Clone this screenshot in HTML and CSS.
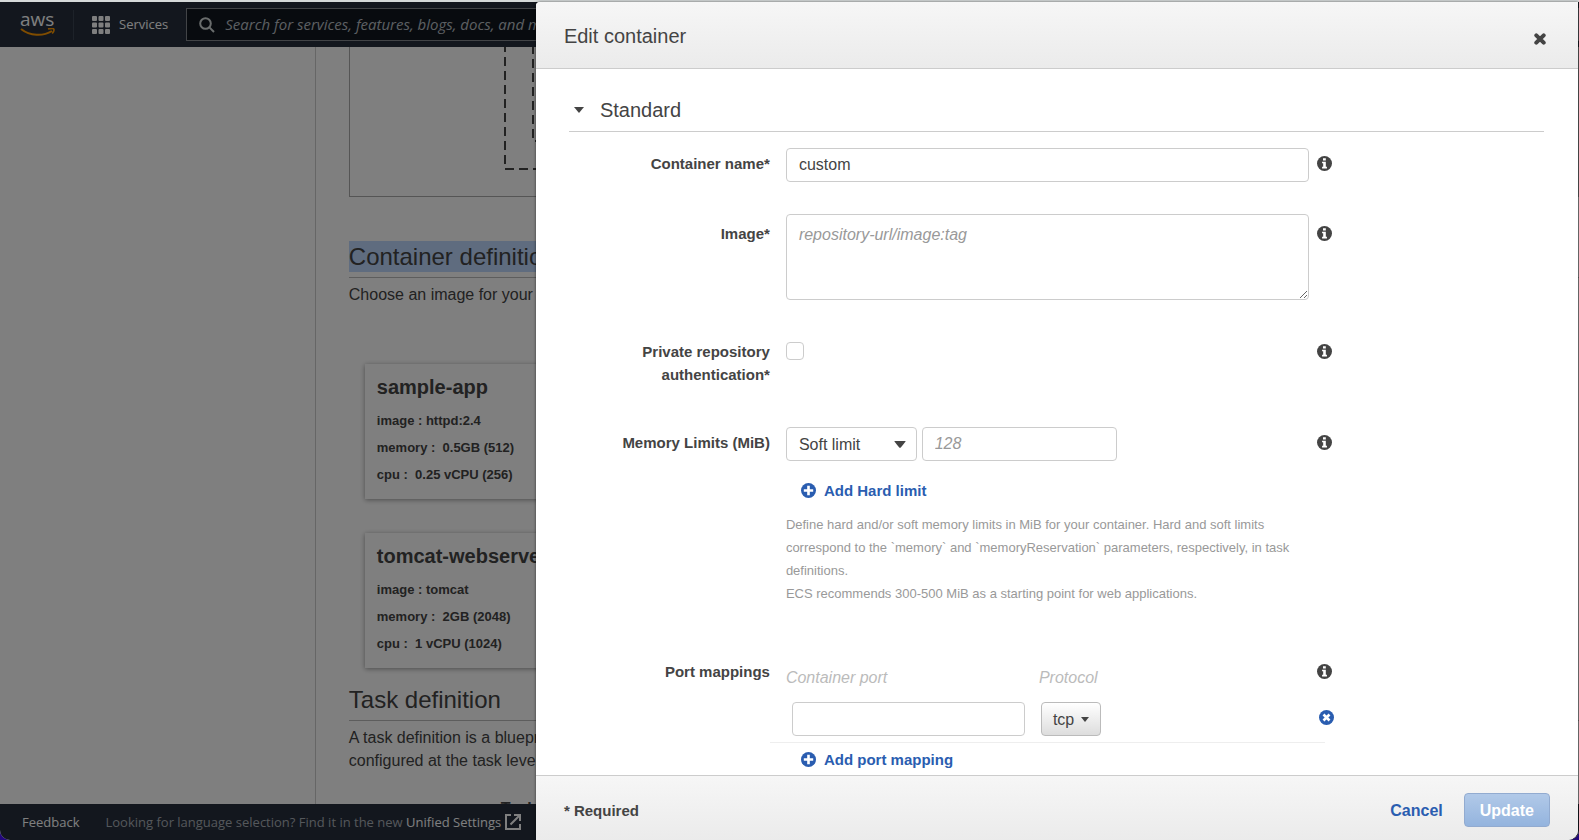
FILE: index.html
```html
<!DOCTYPE html>
<html lang="en">
<head>
    <meta charset="UTF-8">
    <meta name="viewport" content="width=device-width, initial-scale=1.0">
    <title>Edit container</title>
    <link rel="stylesheet" href="styles.css">
</head>
<body>
    <!-- shared icons -->
    <svg class="sprite" aria-hidden="true">
        <symbol id="icon-info" viewBox="0 0 16 16">
            <circle cx="8" cy="8" r="8"/>
            <path fill="#fff" d="M6.4 2.3h3v2.4h-3zM5.4 6h4v5.4h1.2v1.8H5.4v-1.8h1.2V7.8H5.4z"/>
        </symbol>
        <symbol id="icon-plus" viewBox="0 0 16 16">
            <circle cx="8" cy="8" r="8"/>
            <path fill="#fff" d="M6.6 3h2.800v3.600H13v2.800H9.400V13H6.600V9.400H3V6.600h3.600z"/>
        </symbol>
        <symbol id="icon-remove" viewBox="0 0 16 16">
            <circle cx="8" cy="8" r="8"/>
            <path stroke="#fff" stroke-width="2.8" d="M4.8 4.8l6.4 6.4M11.2 4.8l-6.4 6.4"/>
        </symbol>
    </svg>

    <div class="page">
        <header class="navbar">
            <a href="#" class="logo" aria-label="aws home">
                <span class="logo-text">aws</span>
                <svg class="logo-smile" width="36" height="10" viewBox="0 0 36 10" fill="none" stroke="#ff9900">
                    <path stroke-width="2" d="M1 1c9 7.200 22 7.600 31 2"/>
                    <path stroke-width="1.600" d="M28 .9c3-.6 5.400-.6 5.800.2s-.4 3-1.600 4.400"/>
                </svg>
            </a>
            <button type="button" class="services">
                <svg width="18" height="18" viewBox="0 0 18 18" fill="#fff">
                    <rect width="5" height="5" rx="1"/><rect x="6.500" width="5" height="5" rx="1"/><rect x="13" width="5" height="5" rx="1"/>
                    <rect y="6.500" width="5" height="5" rx="1"/><rect x="6.500" y="6.500" width="5" height="5" rx="1"/><rect x="13" y="6.500" width="5" height="5" rx="1"/>
                    <rect y="13" width="5" height="5" rx="1"/><rect x="6.500" y="13" width="5" height="5" rx="1"/><rect x="13" y="13" width="5" height="5" rx="1"/>
                </svg>
                Services
            </button>
            <div class="search">
                <svg width="16" height="16" viewBox="0 0 16 16" fill="none" stroke="#d5dbdb" stroke-width="2">
                    <circle cx="6.500" cy="6.500" r="5.300"/>
                    <path d="M10.400 10.400L15 15"/>
                </svg>
                <input type="text" aria-label="Search" placeholder="Search for services, features, blogs, docs, and more">
            </div>
        </header>

        <div class="layout">
            <nav class="sidebar"></nav>
            <main class="content">
                <div class="diagram">
                    <svg width="190" height="149" fill="none" stroke="#444" stroke-width="2" stroke-dasharray="9 5">
                        <path d="M155 -4V122H190"/>
                        <path d="M183 -2V94H190"/>
                    </svg>
                </div>
                <h2 class="section-title"><span class="selected">Container definition</span></h2>
                <p class="intro">Choose an image for your container below to get started quickly.</p>
                <div class="cards">
                    <div class="card">
                        <h3>sample-app</h3>
                        <p>image : httpd:2.4</p>
                        <p>memory : &nbsp;0.5GB (512)</p>
                        <p>cpu : &nbsp;0.25 vCPU (256)</p>
                    </div>
                    <div class="card">
                        <h3>tomcat-webserver</h3>
                        <p>image : tomcat</p>
                        <p>memory : &nbsp;2GB (2048)</p>
                        <p>cpu : &nbsp;1 vCPU (1024)</p>
                    </div>
                </div>
                <h2 class="section-title">Task definition</h2>
                <p class="intro">A task definition is a blueprint for your application.<br>configured at the task level using parameters.</p>
                <p class="task-name">Task</p>
            </main>
        </div>

        <footer class="page-footer">
            <a href="#" class="feedback">Feedback</a>
            <span>Looking for language selection? Find it in the new <a href="#">Unified Settings</a></span>
            <svg width="16" height="16" viewBox="0 0 16 16" fill="none" stroke="#fff" stroke-width="2">
                <path d="M6 1H1v14h14v-5M9 1h6v6M15 1L5.500 10.500"/>
            </svg>
        </footer>
        <div class="overlay"></div>
    </div>

    <section class="modal" role="dialog" aria-labelledby="modalTitle">
        <header class="modal-header">
            <h1 id="modalTitle">Edit container</h1>
            <button type="button" class="close" aria-label="Close">
                <svg width="12" height="12" viewBox="0 0 12 12" stroke="#444" stroke-width="4" stroke-linecap="round">
                    <path d="M2.300 2.300l7.400 7.400M9.700 2.300L2.300 9.700"/>
                </svg>
            </button>
        </header>

        <form class="modal-body" id="containerForm">
            <h2 class="group-title">
                <svg width="10" height="6" viewBox="0 0 10 6" fill="#444"><path d="M0 0h10L5 6z"/></svg>
                Standard
            </h2>

            <div class="form-row">
                <label for="name">Container name*</label>
                <input type="text" id="name" value="custom">
                <svg class="icon info"><use href="#icon-info"/></svg>
            </div>

            <div class="form-row image-row">
                <label for="image">Image*</label>
                <textarea id="image" placeholder="repository-url/image:tag"></textarea>
                <svg class="icon info"><use href="#icon-info"/></svg>
            </div>

            <div class="form-row auth-row">
                <label for="auth">Private repository authentication*</label>
                <input type="checkbox" id="auth">
                <svg class="icon info"><use href="#icon-info"/></svg>
            </div>

            <div class="form-row memory-row">
                <label for="memory">Memory Limits (MiB)</label>
                <div>
                    <div class="memory-inputs">
                        <div class="select-wrap">
                            <select aria-label="Limit type">
                                <option>Soft limit</option>
                                <option>Hard limit</option>
                            </select>
                            <svg class="caret" width="12" height="7" viewBox="0 0 12 7" fill="#444"><path d="M1 0h10q1 0 .4.800L6.800 6.400q-.8.800-1.600 0L.6.800Q0 0 1 0z"/></svg>
                        </div>
                        <input type="text" id="memory" placeholder="128">
                    </div>
                    <button type="button" class="add-link hard-limit"><svg class="icon"><use href="#icon-plus"/></svg>Add Hard limit</button>
                    <p class="help">Define hard and/or soft memory limits in MiB for your container. Hard and soft limits correspond to the `memory` and `memoryReservation` parameters, respectively, in task definitions.<br>ECS recommends 300-500 MiB as a starting point for web applications.</p>
                </div>
                <svg class="icon info"><use href="#icon-info"/></svg>
            </div>

            <div class="form-row">
                <label for="port">Port mappings</label>
                <div class="ports">
                    <div class="port-grid port-head">
                        <span>Container port</span>
                        <span>Protocol</span>
                    </div>
                    <div class="port-grid port-line">
                        <input type="text" id="port">
                        <button type="button" class="protocol">tcp
                            <svg width="8" height="5" viewBox="0 0 8 5" fill="#444"><path d="M0 0h8L4 5z"/></svg>
                        </button>
                    </div>
                    <button type="button" class="add-link"><svg class="icon"><use href="#icon-plus"/></svg>Add port mapping</button>
                </div>
                <div class="port-icons">
                    <svg class="icon info"><use href="#icon-info"/></svg>
                    <button type="button" class="remove" aria-label="Remove port mapping"><svg class="icon"><use href="#icon-remove"/></svg></button>
                </div>
            </div>
        </form>

        <footer class="modal-footer">
            <strong>* Required</strong>
            <button type="button" class="cancel">Cancel</button>
            <button type="submit" form="containerForm" class="update" disabled>Update</button>
        </footer>
    </section>
</body>
</html>
```
FILE: styles.css
```css
* {
    box-sizing: border-box;
}
body {
    margin: 0;
    height: 100vh;
    overflow: hidden;
    background: #24087e;
    border-top: 2px solid #d5d9d9;
    font-family: "Liberation Sans", Arial, sans-serif;
    font-size: 16px;
    line-height: 23px;
    color: #444;
}
h1, h2, h3, p {
    margin: 0;
    font-weight: normal;
}
button, input, select, textarea {
    font: inherit;
    color: inherit;
}
button {
    border: none;
    background: none;
    padding: 0;
    cursor: pointer;
}
svg {
    flex: none;
}
a {
    color: inherit;
    text-decoration: none;
}
.sprite {
    display: none;
}

/* page behind the dialog */
.page {
    position: relative;
    display: flex;
    flex-direction: column;
    height: 100%;
    overflow: hidden;
    background: #fff;
    border-radius: 0 0 10px 10px;
}
.overlay {
    position: absolute;
    inset: 0;
    background: rgba(0, 0, 0, 0.5);
}
.navbar {
    flex: none;
    display: flex;
    align-items: center;
    height: 45px;
    padding-left: 20px;
    background: #262f3d;
    color: #fff;
    font-family: "Open Sans", sans-serif;
}
.logo {
    display: flex;
    flex-direction: column;
    width: 54px;
    height: 30px;
    border-right: 1px solid #3a4553;
}
.logo-text {
    font-size: 19px;
    line-height: 18px;
}
.services {
    display: flex;
    align-items: center;
    gap: 9px;
    margin: 0 18px;
    font-size: 13px;
}
.search {
    flex: 1;
    display: flex;
    align-items: center;
    gap: 10px;
    height: 33px;
    padding-left: 12px;
    border: 1px solid #84898f;
    background: #10171f;
}
.search input {
    flex: 1;
    border: none;
    background: none;
    padding: 0;
    font-size: 15px;
}
.search input::placeholder {
    color: #b9bfc4;
    opacity: 1;
    font-style: italic;
}
.layout {
    flex: 1;
    display: flex;
    min-height: 0;
}
.sidebar {
    width: 20%;
    border-right: 1px solid #ccc;
}
.content {
    flex: 1;
    padding-left: 33px;
}
.diagram {
    height: 150px;
    border: 1px solid #aaa;
    border-top: none;
}
.section-title {
    padding-bottom: 5px;
    border-bottom: 1px solid #bbb;
    font-size: 24px;
    line-height: 31px;
}
.diagram + .section-title {
    margin-top: 44px;
}
.selected {
    display: inline-block;
    background: #bfd8ff;
}
.intro {
    margin-top: 5px;
}
.cards {
    display: flex;
    flex-direction: column;
    gap: 34px;
    padding: 58px 16px 16px;
}
.card {
    height: 135px;
    padding: 10px 12px;
    box-shadow: 0 1px 5px rgba(0, 0, 0, 0.4);
    font-size: 13px;
    line-height: 27px;
}
.card h3 {
    margin-bottom: 7px;
    font-size: 20px;
    line-height: 26px;
    font-weight: bold;
}
.card p {
    font-weight: bold;
}
.task-name {
    padding: 25px 0 0 152px;
    font-weight: bold;
}
.page-footer {
    position: relative;
    flex: none;
    display: flex;
    align-items: center;
    height: 36px;
    padding-left: 22px;
    background: #262f3d;
    color: #aab0b7;
    font-family: "Open Sans", sans-serif;
    font-size: 13px;
}
.page-footer a {
    color: #fff;
}
.page-footer .feedback {
    margin-right: 26px;
}
.page-footer svg {
    margin-left: 4px;
}

/* dialog */
.modal {
    position: absolute;
    top: 2px;
    right: 1px;
    bottom: 0;
    width: 66%;
    display: flex;
    flex-direction: column;
    overflow: hidden;
    background: #fff;
    border-radius: 4px 0 10px 0;
    box-shadow: 0 0 3px rgba(0, 0, 0, 0.6);
}
.modal-header, .modal-footer {
    flex: none;
    display: flex;
    align-items: center;
    padding: 2px 28px 0;
    background: linear-gradient(#f6f6f6, #ebebeb);
}
.modal-header {
    height: 67px;
    justify-content: space-between;
    border-bottom: 1px solid #ccc;
}
.modal-header h1 {
    font-size: 20px;
}
.close {
    display: flex;
    margin: 6px 4px 0 0;
}
.modal-body {
    flex: 1;
    min-height: 0;
    overflow: hidden;
    padding: 24px 34px 0 33px;
}
.group-title {
    display: flex;
    align-items: center;
    gap: 16px;
    height: 39px;
    margin-bottom: 16px;
    padding: 0 0 4px 5px;
    border-bottom: 1px solid #ccc;
    font-size: 20px;
}
.form-row {
    display: grid;
    grid-template-columns: 209fr 523fr 227fr;
    column-gap: 8px;
    align-items: start;
    margin-bottom: 32px;
}
.form-row > label {
    padding: 4px 8px 0 40px;
    text-align: right;
    font-size: 15px;
    font-weight: bold;
}
.image-row {
    margin-bottom: 36px;
}
.image-row > label {
    padding-top: 8px;
}
.auth-row {
    margin-bottom: 41px;
}
.memory-row {
    margin-bottom: 51px;
}
.modal input[type="text"], .modal textarea, .modal select {
    width: 100%;
    height: 34px;
    padding: 0 12px;
    border: 1px solid #ccc;
    border-radius: 4px;
    background: #fff;
}
.modal textarea {
    display: block;
    height: 86px;
    padding-top: 8px;
}
.modal ::placeholder {
    color: #999;
    opacity: 1;
    font-style: italic;
}
.modal input[type="checkbox"] {
    appearance: none;
    width: 18px;
    height: 18px;
    margin: 6px 0 0;
    border: 1px solid #ccc;
    border-radius: 4px;
}
.icon {
    width: 15px;
    height: 15px;
    fill: #2a5db0;
}
.icon.info {
    margin-top: 8px;
    fill: #444;
}
.image-row .icon {
    margin-top: 12px;
}
.memory-inputs {
    display: flex;
    gap: 5px;
}
.select-wrap {
    position: relative;
    width: 25%;
}
.modal select {
    appearance: none;
}
.caret {
    position: absolute;
    top: 14px;
    right: 11px;
    pointer-events: none;
}
.modal .memory-inputs input {
    width: 195px;
}
.add-link {
    display: flex;
    align-items: center;
    gap: 8px;
    margin-left: 15px;
    color: #2a5db0;
    font-size: 15px;
    font-weight: bold;
}
.hard-limit {
    margin-top: 18px;
}
.help {
    margin-top: 11px;
    font-size: 13px;
    color: #999;
}
.ports {
    padding-top: 10px;
}
.port-grid {
    display: grid;
    grid-template-columns: 237fr 270fr;
    column-gap: 16px;
}
.port-head {
    margin-bottom: 13px;
    font-style: italic;
    color: #bbb;
}
.port-line {
    margin: 0 -16px 5px;
    padding: 0 16px 6px;
    border-bottom: 1px solid #eee;
}
.modal .port-line input {
    width: auto;
    margin-left: 6px;
}
.protocol {
    display: flex;
    align-items: center;
    justify-self: start;
    gap: 7px;
    height: 34px;
    padding: 0 11px;
    border: 1px solid #bbb;
    border-radius: 4px;
    background: linear-gradient(#fff, #ddd);
}
.port-icons {
    display: flex;
    flex-direction: column;
}
.remove {
    display: flex;
    margin: 31px 0 0 2px;
}
.modal-footer {
    height: 65px;
    padding-top: 4px;
    border-top: 1px solid #ccc;
}
.modal-footer strong {
    font-size: 15px;
}
.cancel {
    margin: 0 21px 0 auto;
    color: #2a5db0;
    font-weight: bold;
}
.update {
    height: 34px;
    padding: 0 15px;
    border: 1px solid #92abd0;
    border-radius: 4px;
    background: linear-gradient(#b1c9e8, #94b4de);
    color: #fff;
    font-weight: bold;
}
```
